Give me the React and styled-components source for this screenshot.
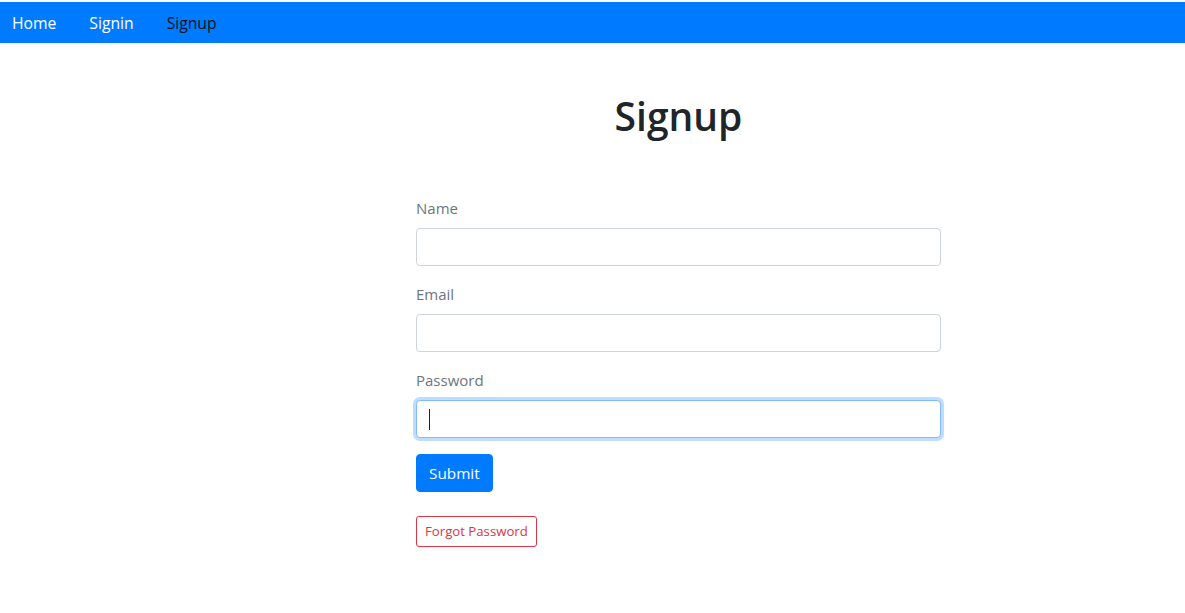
import React from 'react';
import styled, { createGlobalStyle } from 'styled-components';

const GlobalStyle = createGlobalStyle`
  html, body {
    margin: 0;
    padding: 0;
    background: #fff;
    font-family: 'Open Sans', 'Noto Sans', sans-serif;
    font-size: 16px;
    line-height: 1.5;
    color: #212529;
  }
  * {
    box-sizing: border-box;
  }
`;

const Page = styled.div`
  min-height: 100vh;
  padding-top: 2px;
  background: #fff;
`;

const Navbar = styled.nav`
  display: flex;
  align-items: center;
  height: 41px;
  padding: 2px 0 0 12px;
  background: #007bff;
`;

const NavLink = styled.a`
  padding: 8px 0;
  margin-right: 33px;
  font-size: 15.7px;
  text-decoration: none;
  color: ${({ active }) => (active ? '#0a1020' : '#fff')};
  cursor: pointer;
`;

const Main = styled.main`
  width: 525px;
  margin-left: 416px;
  padding-top: 49px;
`;

const Title = styled.h1`
  margin: 0 0 56px;
  text-align: center;
  font-size: 39px;
  font-weight: 600;
  line-height: 48px;
  color: #212529;
`;

const Form = styled.form`
  display: flex;
  flex-direction: column;
`;

const Group = styled.div`
  margin-bottom: 16px;
`;

const Label = styled.label`
  display: block;
  margin-bottom: 8px;
  font-size: 15px;
  line-height: 24px;
  color: #6c757d;
`;

const InputWrap = styled.div`
  position: relative;
`;

const Input = styled.input`
  display: block;
  width: 100%;
  height: 38px;
  padding: 6px 12px;
  font-family: inherit;
  font-size: 16px;
  color: #495057;
  background: #fff;
  border: 1px solid ${({ focused }) => (focused ? '#80bdff' : '#ced4da')};
  border-radius: 4px;
  outline: none;
  box-shadow: ${({ focused }) => (focused ? '0 0 0 3px rgba(0, 123, 255, 0.25)' : 'none')};
`;

const Caret = styled.span`
  position: absolute;
  left: 13px;
  top: 9px;
  width: 1px;
  height: 21px;
  background: #212529;
`;

const Actions = styled.div`
  display: flex;
  flex-direction: column;
  align-items: flex-start;
  gap: 24px;
`;

const Button = styled.button`
  font-family: inherit;
  cursor: pointer;
  border: 1px solid ${({ variant }) => (variant === 'danger' ? '#dc3545' : '#007bff')};
  background: ${({ variant }) => (variant === 'danger' ? '#fff' : '#007bff')};
  color: ${({ variant }) => (variant === 'danger' ? '#dc3545' : '#fff')};
  border-radius: ${({ small }) => (small ? '3px' : '4px')};
  height: ${({ small }) => (small ? '31px' : '38px')};
  padding: ${({ small }) => (small ? '1px 8px 0' : '1px 12px 0')};
  font-size: ${({ small }) => (small ? '13.2px' : '15.3px')};
  line-height: 1.5;
`;

const fields = [
  { id: 'name', label: 'Name', type: 'text' },
  { id: 'email', label: 'Email', type: 'email' },
  { id: 'password', label: 'Password', type: 'password', focused: true },
];

export default function App() {
  return (
    <Page>
      <GlobalStyle />
      <Navbar>
        <NavLink>Home</NavLink>
        <NavLink>Signin</NavLink>
        <NavLink active>Signup</NavLink>
      </Navbar>
      <Main>
        <Title>Signup</Title>
        <Form onSubmit={(e) => e.preventDefault()}>
          {fields.map((f) => (
            <Group key={f.id}>
              <Label htmlFor={f.id}>{f.label}</Label>
              <InputWrap>
                <Input id={f.id} type={f.type} focused={f.focused} />
                {f.focused && <Caret />}
              </InputWrap>
            </Group>
          ))}
          <Actions>
            <Button type="submit">Submit</Button>
            <Button type="button" variant="danger" small>
              Forgot Password
            </Button>
          </Actions>
        </Form>
      </Main>
    </Page>
  );
}
